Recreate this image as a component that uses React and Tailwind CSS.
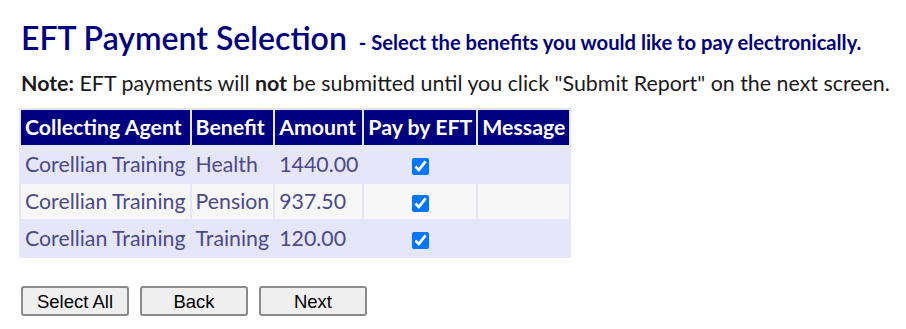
import React from "react";

const rows = [
  { agent: "Corellian Training", benefit: "Health", amount: "1440.00" },
  { agent: "Corellian Training", benefit: "Pension", amount: "937.50" },
  { agent: "Corellian Training", benefit: "Training", amount: "120.00" },
];

export default function App() {
  return (
    <div className="w-[906px] h-[329px] bg-white pl-[21px] pr-[10px] pt-[19px] font-['Lato',sans-serif]">
      <div className="flex items-baseline gap-[12px] text-[#000080] whitespace-nowrap">
        <h1 className="text-[32px] font-semibold leading-[38px]">EFT Payment Selection</h1>
        <span className="text-[20.2px] font-bold">- Select the benefits you would like to pay electronically.</span>
      </div>
      <p className="mt-[12px] text-[21.4px] text-[#1a1a1a] leading-[28px] whitespace-nowrap">
        <b>Note:</b> EFT payments will <b>not</b> be submitted until you click "Submit Report" on the next screen.
      </p>

      <table className="mt-[11px] bg-[#e6e6fa] border-separate border-spacing-[2px] -ml-[2px] text-[21.3px]">
        <thead>
          <tr className="text-white font-bold">
            <th className="bg-[#000080] px-[4px] h-[35px] text-left whitespace-nowrap">Collecting Agent</th>
            <th className="bg-[#000080] px-[4px] text-left">Benefit</th>
            <th className="bg-[#000080] px-[4px] text-left">Amount</th>
            <th className="bg-[#000080] px-[4px] text-left whitespace-nowrap">Pay by EFT</th>
            <th className="bg-[#000080] px-[4px] text-left">Message</th>
          </tr>
        </thead>
        <tbody className="text-[#4a4a8a]">
          {rows.map((r, i) => (
            <tr key={i} className={i % 2 === 1 ? "bg-[#f7f7f7]" : ""}>
              <td className="px-[4px] h-[35px] whitespace-nowrap">{r.agent}</td>
              <td className="px-[4px]">{r.benefit}</td>
              <td className="px-[4px]">{r.amount}</td>
              <td className="px-[4px] text-center">
                <input type="checkbox" defaultChecked className="w-[17px] h-[17px] align-middle" />
              </td>
              <td className="px-[4px]"></td>
            </tr>
          ))}
        </tbody>
      </table>

      <div className="mt-[28px] flex gap-[11px] font-['Liberation_Sans',Arial,sans-serif] text-[18.5px] text-black">
        <button className="w-[108px] h-[30px] bg-[#efefef] border-2 border-[#8a8a8a] rounded-[3px]">Select All</button>
        <button className="w-[108px] h-[30px] bg-[#efefef] border-2 border-[#8a8a8a] rounded-[3px]">Back</button>
        <button className="w-[108px] h-[30px] bg-[#efefef] border-2 border-[#8a8a8a] rounded-[3px]">Next</button>
      </div>
    </div>
  );
}
